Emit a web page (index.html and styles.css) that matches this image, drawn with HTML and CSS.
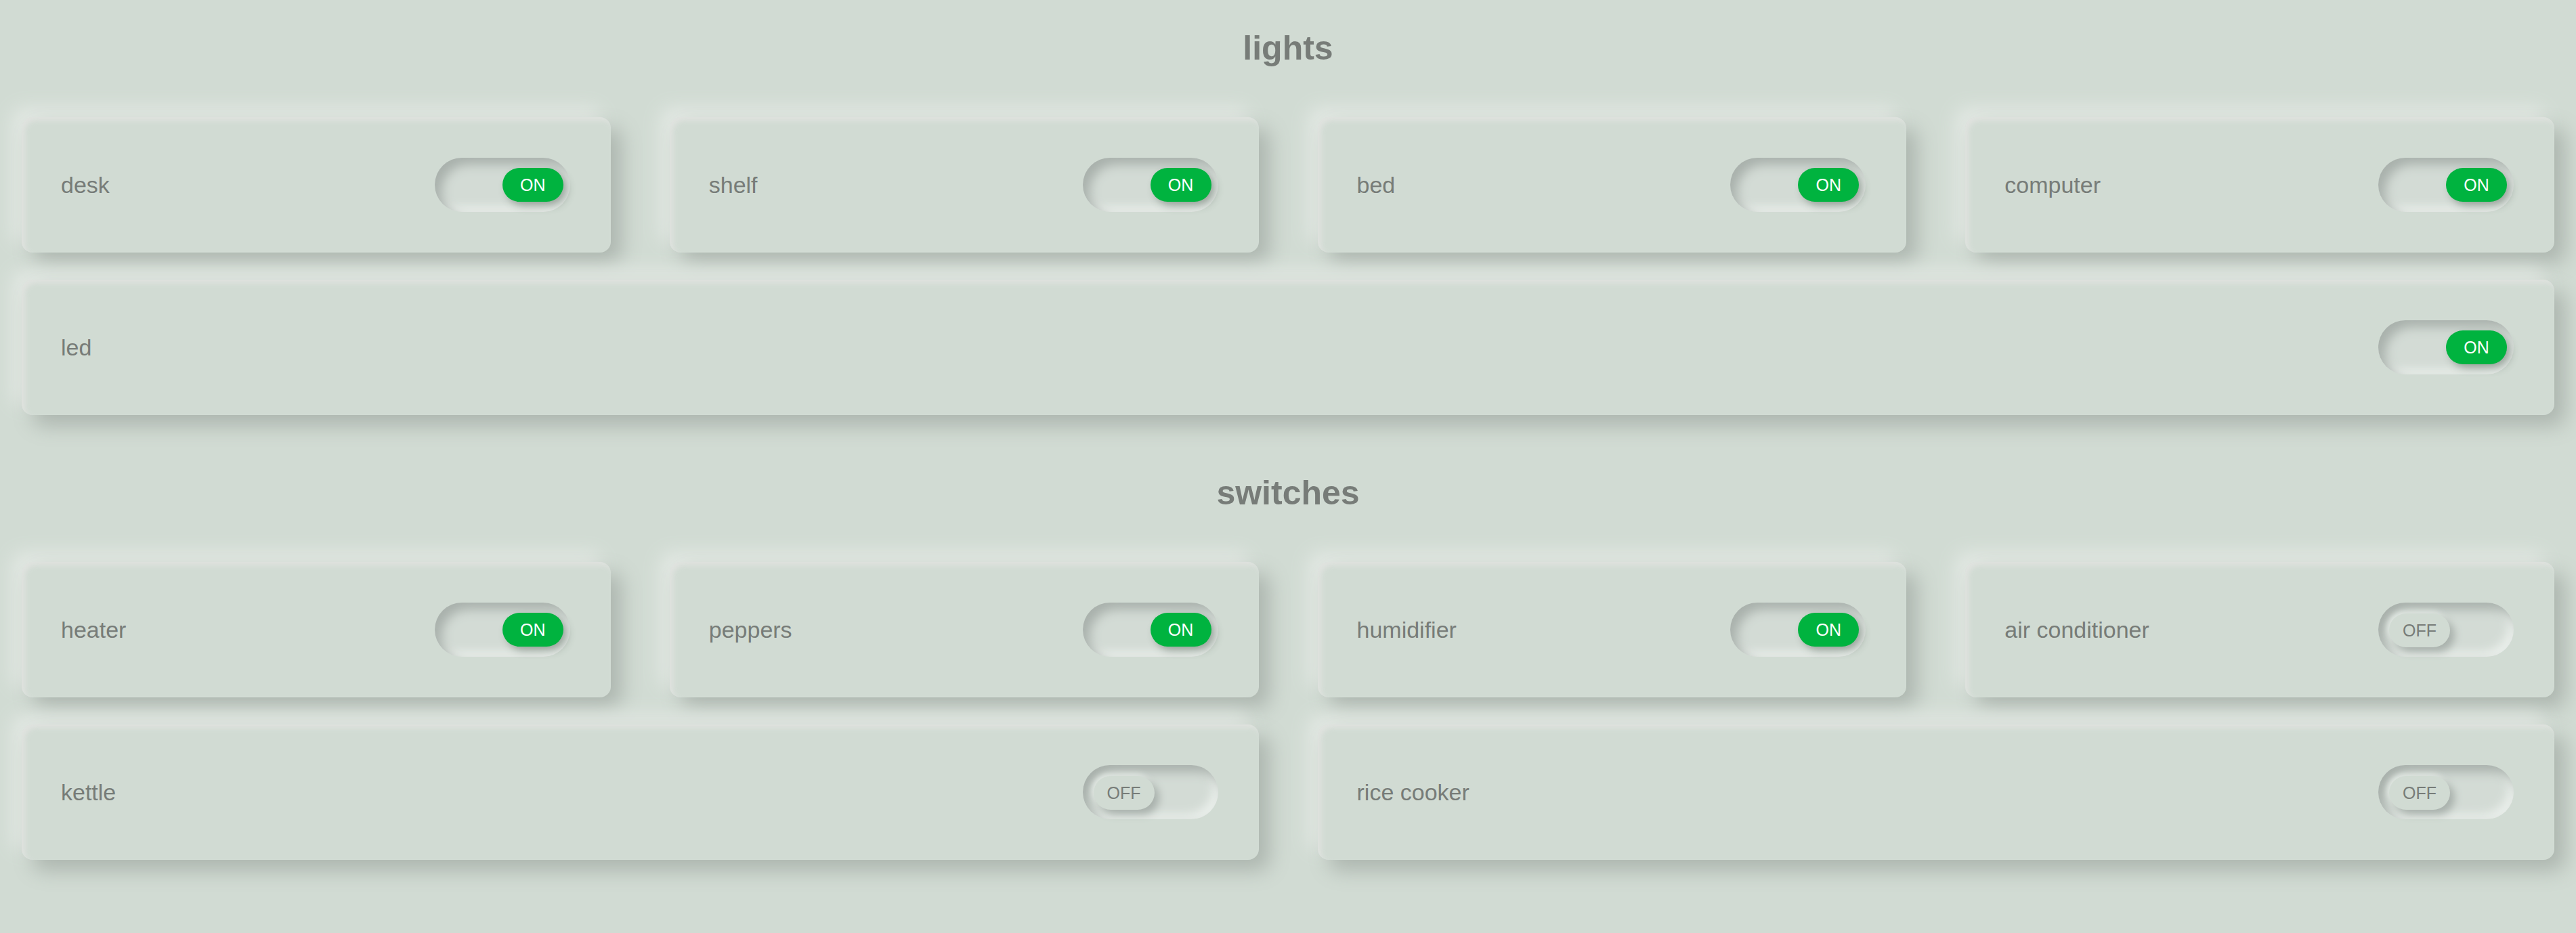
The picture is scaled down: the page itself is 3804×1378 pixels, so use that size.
FILE: index.html
```html
<!DOCTYPE html>
<html lang="en">
<head>
<meta charset="utf-8">
<title>Home</title>
<link rel="stylesheet" href="styles.css">
</head>
<body>
<main class="page">
  <section class="section">
    <h2 class="section-title">lights</h2>
    <div class="grid">
      <div class="card"><span class="label">desk</span><div class="toggle on"><span class="knob">ON</span></div></div>
      <div class="card"><span class="label">shelf</span><div class="toggle on"><span class="knob">ON</span></div></div>
      <div class="card"><span class="label">bed</span><div class="toggle on"><span class="knob">ON</span></div></div>
      <div class="card"><span class="label">computer</span><div class="toggle on"><span class="knob">ON</span></div></div>
      <div class="card span-4"><span class="label">led</span><div class="toggle on"><span class="knob">ON</span></div></div>
    </div>
  </section>
  <section class="section">
    <h2 class="section-title">switches</h2>
    <div class="grid">
      <div class="card"><span class="label">heater</span><div class="toggle on"><span class="knob">ON</span></div></div>
      <div class="card"><span class="label">peppers</span><div class="toggle on"><span class="knob">ON</span></div></div>
      <div class="card"><span class="label">humidifier</span><div class="toggle on"><span class="knob">ON</span></div></div>
      <div class="card"><span class="label">air conditioner</span><div class="toggle off"><span class="knob">OFF</span></div></div>
      <div class="card span-2"><span class="label">kettle</span><div class="toggle off"><span class="knob">OFF</span></div></div>
      <div class="card span-2"><span class="label">rice cooker</span><div class="toggle off"><span class="knob">OFF</span></div></div>
    </div>
  </section>
</main>
</body>
</html>
```
FILE: styles.css
```css
html, body {
  margin: 0;
  padding: 0;
  background: #d1dbd3;
}
body {
  font-family: "Liberation Sans", Arial, Helvetica, sans-serif;
  color: #777c78;
}
.page {
  padding: 0 32px 108px;
}
.section {
  padding-top: 41px;
}
.section + .section {
  margin-top: 44px;
}
.section-title {
  margin: 0;
  text-align: center;
  font-size: 50px;
  line-height: 60px;
  font-weight: 700;
  color: #777c78;
}
.grid {
  margin-top: 72px;
  display: grid;
  grid-template-columns: repeat(4, 1fr);
  column-gap: 87px;
  row-gap: 40px;
}
.span-2 { grid-column: span 2; }
.span-4 { grid-column: span 4; }
.card {
  height: 200px;
  box-sizing: border-box;
  padding: 0 60px 0 58px;
  display: flex;
  align-items: center;
  justify-content: space-between;
  border-radius: 16px;
  background: #d1dbd3;
  box-shadow: 16px 16px 30px #adb6af, -14px -14px 28px #e3e9e4, inset 5px 5px 8px rgba(236, 234, 234, 0.55);
}
.label {
  font-size: 34px;
  color: #777c78;
}
.toggle {
  position: relative;
  width: 200px;
  height: 80px;
  border-radius: 40px;
  background: #d3dbd5;
  box-shadow: inset 10px 10px 16px #a9b1ac, inset -8px -8px 14px #e9eeea;
  flex-shrink: 0;
}
.knob {
  position: absolute;
  top: 15px;
  width: 90px;
  height: 50px;
  border-radius: 25px;
  display: flex;
  align-items: center;
  justify-content: center;
  font-size: 25px;
}
.toggle.on .knob {
  left: 100px;
  background: #00b33f;
  color: #ffffff;
  box-shadow: 6px 6px 12px rgba(80, 95, 85, 0.45);
}
.toggle.off .knob {
  left: 16px;
  top: 16px;
  background: #d1dbd3;
  color: #777c78;
  box-shadow: 7px 7px 12px #a9b1ac, -3px -3px 8px #e6ece7;
}
```
